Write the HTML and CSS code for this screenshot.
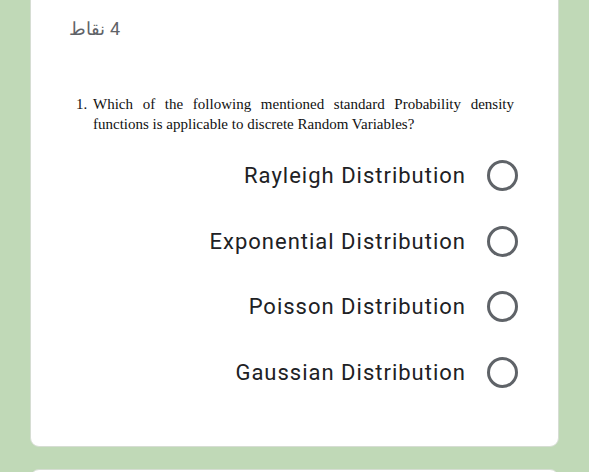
FILE: index.html
```html
<!DOCTYPE html>
<html lang="ar">
<head>
<meta charset="utf-8">
<link rel="stylesheet" href="styles.css">
</head>
<body>
<div class="page">
  <div class="card">
    <div class="points" dir="rtl">4 نقاط</div>
    <div class="question" dir="ltr">
      <span class="num">1.</span>
      <p class="qtext">Which of the following mentioned standard Probability density functions is applicable to discrete Random Variables?</p>
    </div>
    <div class="options">
      <label class="option"><span class="label">Rayleigh Distribution</span><span class="radio"></span></label>
      <label class="option"><span class="label">Exponential Distribution</span><span class="radio"></span></label>
      <label class="option"><span class="label">Poisson Distribution</span><span class="radio"></span></label>
      <label class="option"><span class="label">Gaussian Distribution</span><span class="radio"></span></label>
    </div>
  </div>
  <div class="card next"></div>
</div>
</body>
</html>
```
FILE: styles.css
```css
html, body {
  margin: 0;
  padding: 0;
  background: #c0d9b7;
  width: 589px;
  height: 472px;
  overflow: hidden;
}
.page {
  display: flex;
  flex-direction: column;
  gap: 22px;
  padding: 0 30px 0 30px;
  margin-top: -12px;
}
.card {
  background: #ffffff;
  border: 1px solid #d6ddd3;
  border-radius: 9px;
  height: 459px;
  box-sizing: border-box;
}
.card.next {
  height: 60px;
}
.points {
  font-family: Roboto, "Noto Sans", sans-serif;
  font-size: 18px;
  color: #5f6368;
  padding: 28px 0 0 0;
  width: 89px;
  line-height: 24px;
  height: 24px;
}
.question {
  display: flex;
  margin: 53px 0 0 45px;
  width: 438px;
  font-family: "Liberation Serif", "Times New Roman", serif;
  font-size: 15px;
  line-height: 20px;
  color: #111111;
}
.num {
  width: 17px;
  flex: none;
}
.qtext {
  margin: 0;
  text-align: justify;
  text-align-last: left;
}
.options {
  display: flex;
  flex-direction: column;
  align-items: flex-end;
  gap: 34.6px;
  margin: 26px 40px 0 0;
}
.option {
  display: flex;
  align-items: center;
  gap: 21px;
  height: 31px;
}
.label {
  font-family: Roboto, "Noto Sans", sans-serif;
  font-size: 22px;
  color: #202124;
  letter-spacing: 1px;
}
.radio {
  width: 31px;
  height: 31px;
  box-sizing: border-box;
  border: 3px solid #5f6368;
  border-radius: 50%;
}
```
